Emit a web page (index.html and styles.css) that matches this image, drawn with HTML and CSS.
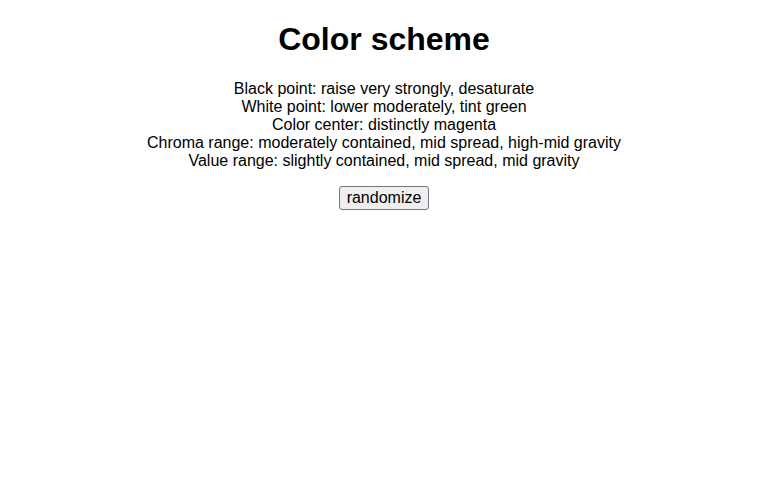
FILE: index.html
```html
<!DOCTYPE html>
<html lang="en">
<head>
    <meta charset="UTF-8">
    <meta name="viewport" content="width=device-width, initial-scale=1.0">
    <title>Color scheme</title>
    <link rel="stylesheet" href="styles.css">
</head>
<body>
    <div class="scheme">
        <h1>Color scheme</h1>

        <!-- Generated description of the palette -->
        <p class="description">
            Black point: raise very strongly, desaturate<br>
            White point: lower moderately, tint green<br>
            Color center: distinctly magenta<br>
            Chroma range: moderately contained, mid spread, high-mid gravity<br>
            Value range: slightly contained, mid spread, mid gravity
        </p>

        <button class="randomize">randomize</button>
    </div>
</body>
</html>
```

FILE: styles.css
```css
body {
    font-family: "Liberation Sans", Arial, sans-serif;
    color: #000;
    background: #fff;
    margin: 0;
}

.scheme {
    text-align: center;
    padding: 0 8px;
}

h1 {
    font-size: 32px;
    margin: 0;
    padding: 21px 0 22px;
}

.description {
    font-size: 16px;
    line-height: 18px;
    margin: 0 0 16px;
}

.randomize {
    font-family: "Liberation Sans", Arial, sans-serif;
    font-size: 16px;
    line-height: 18px;
    padding: 2px 7px;
    color: #000;
    background: #efefef;
    border: 1px solid #767676;
    border-radius: 3px;
}
```
